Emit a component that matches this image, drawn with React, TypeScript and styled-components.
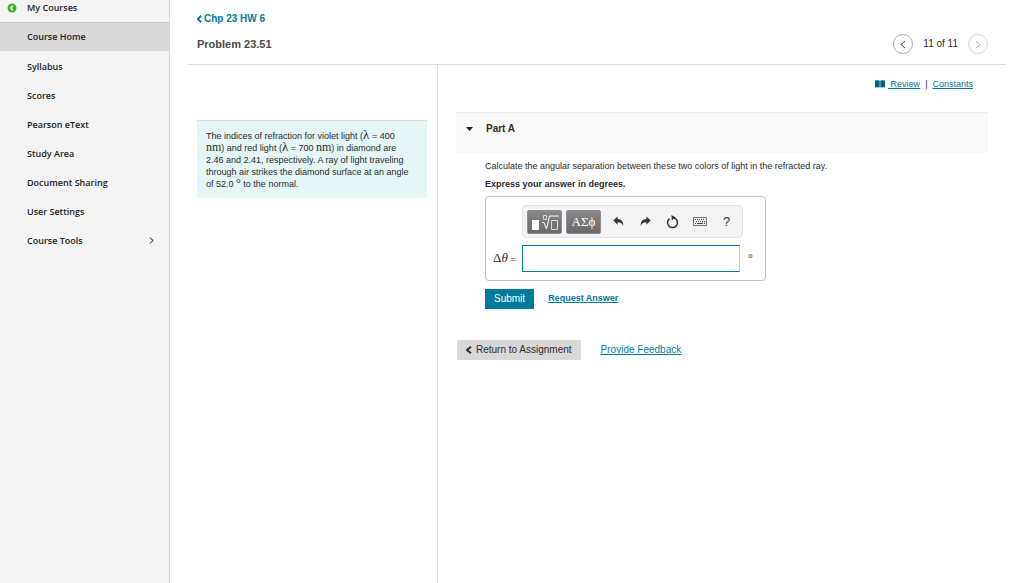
import React from "react";
import styled, { createGlobalStyle, css } from "styled-components";

const teal = "#007a9c";

const GlobalStyle = createGlobalStyle`
  * { box-sizing: border-box; }
  body {
    margin: 0;
    background: #fff;
    color: #2b2b2b;
    font-family: "Liberation Sans", Arial, sans-serif;
    font-size: 9px;
    line-height: 12px;
  }
  button, input { font: inherit; color: inherit; margin: 0; }
  a { color: ${teal}; }
  p, h1, h2 { margin: 0; }
`;

const Page = styled.div`
  display: flex;
  min-height: 100vh;
`;

const Sidebar = styled.nav`
  flex: 0 0 170px;
  background: #f4f4f4;
  border-right: 1px solid #d4d4d4;
  font-family: "Open Sans", sans-serif;
`;

const NavItem = styled.a<{ $kind?: "top" | "active" }>`
  display: flex;
  align-items: center;
  justify-content: space-between;
  height: 29px;
  padding: 0 15px 0 27px;
  color: #1c1c1c;
  font-weight: 600;
  text-decoration: none;
  ${({ $kind }) =>
    $kind === "top" &&
    css`
      height: 23px;
      padding: 0 7px 7px;
      justify-content: flex-start;
      gap: 10px;
      border-bottom: 1px solid #c6c6c6;
    `}
  ${({ $kind }) =>
    $kind === "active" &&
    css`
      height: 28px;
      margin-bottom: 1px;
      background: #d9d9d9;
    `}
`;

const Main = styled.main`
  flex: 1;
  min-width: 0;
  display: flex;
  flex-direction: column;
  padding: 0 18px;
`;

const Header = styled.header`
  display: flex;
  justify-content: space-between;
  align-items: flex-end;
  height: 65px;
  padding: 0 18px 10px 9px;
  border-bottom: 1px solid #dcdcdc;
`;

const Titles = styled.div`
  display: flex;
  flex-direction: column;
  gap: 12px;
  padding-bottom: 3px;
`;

const BackLink = styled.a`
  display: flex;
  align-items: center;
  gap: 2px;
  font-size: 10px;
  font-weight: 700;
  text-decoration: none;
`;

const ProblemTitle = styled.h1`
  font-size: 11px;
  line-height: 14px;
  color: #4a4a4a;
`;

const Pager = styled.div`
  display: flex;
  align-items: center;
  gap: 10px;
  font-size: 10px;
`;

const RoundButton = styled.button`
  display: flex;
  align-items: center;
  justify-content: center;
  width: 20px;
  height: 20px;
  padding: 0;
  border: 1px solid #aaa;
  border-radius: 50%;
  background: #fff;
  color: #333;
  &:disabled {
    border-color: #d6d6d6;
    color: #aaa;
  }
`;

const Columns = styled.div`
  flex: 1;
  display: flex;
`;

const ProblemPane = styled.section`
  flex: 0 0 250px;
  padding: 55px 10px 0 9px;
  border-right: 1px solid #e2e2e2;
`;

const ProblemText = styled.p`
  padding: 9px 12px 8px 9px;
  border-top: 1px solid #d5dddd;
  background: #e4f6f6;
`;

const Serif = styled.span<{ $size?: number }>`
  font-family: "Liberation Serif", "Times New Roman", serif;
  font-size: ${({ $size = 12 }) => $size}px;
  line-height: 0;
`;

const AnswerPane = styled.section`
  flex: 1;
  min-width: 0;
  padding: 13px 18px 0;
`;

const Resources = styled.div`
  display: flex;
  justify-content: flex-end;
  align-items: center;
  gap: 5px;
  padding-right: 15px;
`;

const BookLink = styled.a`
  display: flex;
  align-items: center;
  gap: 3px;
  white-space: pre;
`;

const PartHeader = styled.button`
  display: flex;
  align-items: center;
  gap: 13px;
  width: 100%;
  height: 41px;
  margin-top: 22px;
  padding: 0 10px 8px;
  border: 0;
  border-top: 1px solid #ececec;
  background: #f9f9f9;
  font-size: 10px;
  font-weight: 700;
  text-align: left;
`;

const PartBody = styled.div`
  padding: 7px 29px 0;
`;

const Instruction = styled.p`
  margin-top: 6px;
  font-weight: 700;
`;

const AnswerBox = styled.div`
  display: flex;
  flex-direction: column;
  gap: 7px;
  width: 281px;
  margin-top: 6px;
  padding: 8px 8px 8px 7px;
  border: 1px solid #bfbfbf;
  border-radius: 4px;
`;

const Toolbar = styled.div`
  display: flex;
  align-items: center;
  gap: 4px;
  width: 221px;
  height: 33px;
  margin-left: 29px;
  padding: 0 2px 0 4px;
  border: 1px solid #e2e2e2;
  border-radius: 4px;
  background: #f4f4f4;
`;

const DarkButton = styled.button`
  display: flex;
  align-items: center;
  justify-content: center;
  width: 35px;
  height: 24px;
  padding: 0;
  border: 1px solid #8d8d90;
  border-radius: 2px;
  background: linear-gradient(#88888b, #69696c);
  color: #fff;
`;

const IconButton = styled.button`
  flex: 1;
  display: flex;
  align-items: center;
  justify-content: center;
  height: 24px;
  padding: 0;
  border: 0;
  background: none;
  color: #333;
  font-size: 13px;
`;

const IconGroup = styled.div`
  flex: 1;
  display: flex;
`;

const AnswerRow = styled.div`
  display: flex;
  align-items: center;
`;

const AnswerLabel = styled.label`
  width: 29px;
  white-space: nowrap;
`;

const AnswerInput = styled.input`
  width: 218px;
  height: 27px;
  padding: 0 6px;
  border: 1px solid ${teal};
  border-right-color: #a9d3de;
  background: #fff;
  outline: none;
`;

const Unit = styled.span`
  padding-left: 8px;
`;

const Actions = styled.div`
  display: flex;
  align-items: center;
  gap: 14px;
  margin-top: 8px;
`;

const SubmitButton = styled.button`
  height: 20px;
  padding: 0 9px;
  border: 0;
  background: ${teal};
  color: #fff;
  font-size: 10px;
`;

const RequestLink = styled.a`
  padding-bottom: 2px;
  font-weight: 700;
`;

const Footer = styled.footer`
  display: flex;
  align-items: center;
  gap: 20px;
  margin-top: 31px;
  padding-left: 1px;
  font-size: 10px;
`;

const ReturnButton = styled.button`
  display: flex;
  align-items: center;
  gap: 4px;
  height: 20px;
  padding: 0 9px;
  border: 0;
  border-radius: 1px;
  background: #d8d8d8;
`;

type ChevronProps = { width: number; height: number; stroke?: number; right?: boolean };

const Chevron = ({ width, height, stroke = 1, right }: ChevronProps) => (
  <svg width={width} height={height} viewBox="0 0 6 10" fill="none" preserveAspectRatio="none" aria-hidden="true">
    <path d={right ? "M1 1l4 4-4 4" : "M5 1L1 5l4 4"} stroke="currentColor" strokeWidth={stroke} vectorEffect="non-scaling-stroke" />
  </svg>
);

const CourseBackIcon = () => (
  <svg width="10" height="10" viewBox="0 0 10 10" aria-hidden="true">
    <circle cx="5" cy="5" r="4.5" fill="#43b02a" />
    <path d="M6 2.6L3.7 5 6 7.4" fill="none" stroke="#fff" strokeWidth="1.3" />
  </svg>
);

const BookIcon = () => (
  <svg width="10" height="8" viewBox="0 0 10 8" aria-hidden="true">
    <path d="M0 .6Q2.5-.3 4.7.6V7.6Q2.5 6.8 0 7.4ZM5.3.6Q7.5-.3 10 .6V7.4Q7.5 6.8 5.3 7.6Z" fill="#00647f" />
  </svg>
);

const TemplateIcon = () => (
  <svg width="28" height="18" viewBox="0 0 28 18" fill="none" aria-hidden="true">
    <path d="M1 7h7v10H1z" fill="#fff" />
    <path d="M12.5 2.5h3v4h-3zM20.5 7.5h6v9h-6z" stroke="#ddd" />
    <path d="M11 9.5h2l2.5 6.5 3-13h9.5" stroke="#fff" />
  </svg>
);

const TurnIcon = ({ redo }: { redo?: boolean }) => (
  <svg width="11" height="11" viewBox="0 0 11 11" aria-hidden="true">
    <path
      d="M4.6.5v2.4C8.2 3.1 10.5 5 10.2 10.2 9.5 7.6 7.9 6.4 4.6 6.3v2.4L.3 4.6Z"
      fill="currentColor"
      transform={redo ? "matrix(-1 0 0 1 11 0)" : undefined}
    />
  </svg>
);

const ResetIcon = () => (
  <svg width="13" height="14" viewBox="0 0 13 14" fill="none" aria-hidden="true">
    <path d="M3.5 3.6A5 5 0 1 0 9.5 3.6L6.5 2.7" stroke="currentColor" strokeWidth="1.5" />
    <path d="M5.4 0l4.2 2.6-3.8 2.7Z" fill="currentColor" />
  </svg>
);

const KeyboardIcon = () => (
  <svg width="14" height="9" viewBox="0 0 14 9" fill="none" aria-hidden="true">
    <path d="M.5.5h13v8H.5z" fill="#eee" stroke="#777" />
    <path d="M2 2.5h10M3 4.5h9" stroke="#444" strokeDasharray="1 1" />
    <path d="M2 6.5h1M4 6.5h6M11 6.5h1" stroke="#444" />
  </svg>
);

const navItems = [
  "Course Home",
  "Syllabus",
  "Scores",
  "Pearson eText",
  "Study Area",
  "Document Sharing",
  "User Settings",
  "Course Tools",
];

export default function App() {
  return (
    <>
      <GlobalStyle />
      <Page>
        <Sidebar>
          <NavItem href="#" $kind="top">
            <CourseBackIcon />
            My Courses
          </NavItem>
          {navItems.map((name) => (
            <NavItem key={name} href="#" $kind={name === "Course Home" ? "active" : undefined}>
              {name}
              {name === "Course Tools" && <Chevron width={5} height={7} right />}
            </NavItem>
          ))}
        </Sidebar>
        <Main>
          <Header>
            <Titles>
              <BackLink href="#">
                <Chevron width={5} height={8} stroke={2} />
                Chp 23 HW 6
              </BackLink>
              <ProblemTitle>Problem 23.51</ProblemTitle>
            </Titles>
            <Pager>
              <RoundButton aria-label="Previous problem">
                <Chevron width={6} height={9} stroke={1} />
              </RoundButton>
              <span>11 of 11</span>
              <RoundButton aria-label="Next problem" disabled>
                <Chevron width={6} height={9} right />
              </RoundButton>
            </Pager>
          </Header>
          <Columns>
            <ProblemPane>
              <ProblemText>
                The indices of refraction for violet light (<Serif $size={13}>λ</Serif> = 400 <Serif>nm</Serif>) and red
                light (<Serif $size={13}>λ</Serif> = 700 <Serif>nm</Serif>) in diamond are 2.46 and 2.41, respectively. A
                ray of light traveling through air strikes the diamond surface at an angle of 52.0 <Serif>°</Serif>{" "}
                to the normal.
              </ProblemText>
            </ProblemPane>
            <AnswerPane>
              <Resources>
                <BookLink href="#">
                  <BookIcon />
                  <span> Review</span>
                </BookLink>
                <span>|</span>
                <a href="#">Constants</a>
              </Resources>
              <PartHeader aria-expanded="true">
                <svg width="7" height="4" viewBox="0 0 7 4" aria-hidden="true">
                  <path d="M0 0h7L3.5 4Z" fill="#222" />
                </svg>
                Part A
              </PartHeader>
              <PartBody>
                <p>Calculate the angular separation between these two colors of light in the refracted ray.</p>
                <Instruction>Express your answer in degrees.</Instruction>
                <AnswerBox>
                  <Toolbar role="toolbar">
                    <DarkButton aria-label="Templates">
                      <TemplateIcon />
                    </DarkButton>
                    <DarkButton>
                      <Serif $size={13}>ΑΣϕ</Serif>
                    </DarkButton>
                    <IconGroup>
                      <IconButton aria-label="Undo">
                        <TurnIcon />
                      </IconButton>
                      <IconButton aria-label="Redo">
                        <TurnIcon redo />
                      </IconButton>
                      <IconButton aria-label="Reset">
                        <ResetIcon />
                      </IconButton>
                      <IconButton aria-label="Keyboard shortcuts">
                        <KeyboardIcon />
                      </IconButton>
                      <IconButton>?</IconButton>
                    </IconGroup>
                  </Toolbar>
                  <AnswerRow>
                    <AnswerLabel htmlFor="answer">
                      <Serif $size={13}>
                        Δ<i>θ</i>
                      </Serif>{" "}
                      =
                    </AnswerLabel>
                    <AnswerInput id="answer" type="text" />
                    <Unit>
                      <Serif>°</Serif>
                    </Unit>
                  </AnswerRow>
                </AnswerBox>
                <Actions>
                  <SubmitButton>Submit</SubmitButton>
                  <RequestLink href="#">Request Answer</RequestLink>
                </Actions>
              </PartBody>
              <Footer>
                <ReturnButton>
                  <Chevron width={6} height={8} stroke={2} />
                  Return to Assignment
                </ReturnButton>
                <a href="#">Provide Feedback</a>
              </Footer>
            </AnswerPane>
          </Columns>
        </Main>
      </Page>
    </>
  );
}
